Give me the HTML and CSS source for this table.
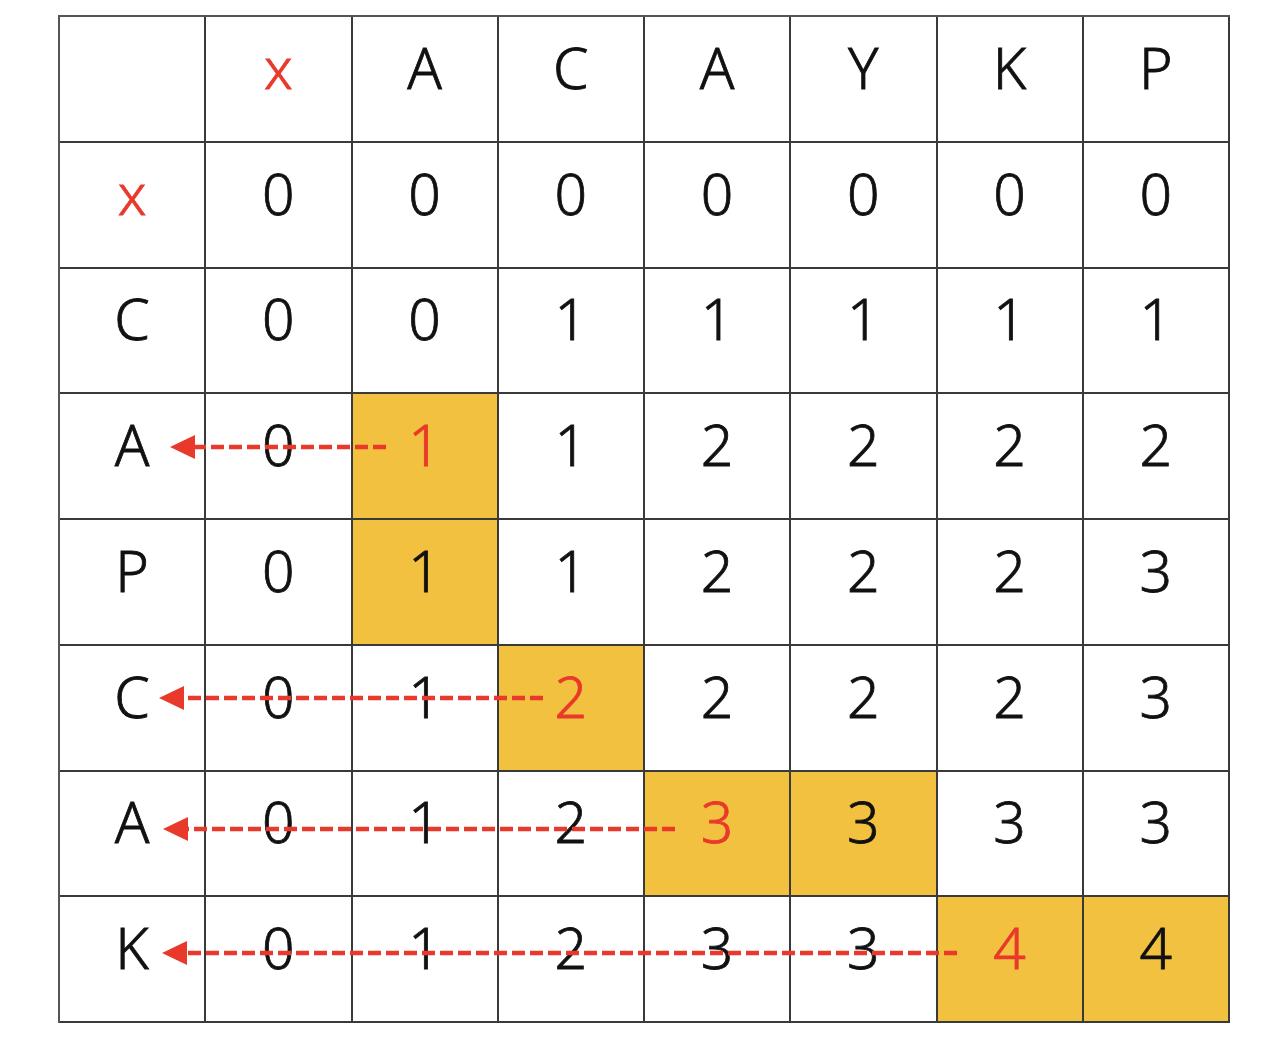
FILE: index.html
```html
<!DOCTYPE html>
<html>
<head>
<meta charset="utf-8">
<link rel="stylesheet" href="styles.css">
</head>
<body>
<div class="wrap">
  <div class="grid">
    <div class="cell"></div><div class="cell red">x</div><div class="cell">A</div><div class="cell">C</div><div class="cell">A</div><div class="cell">Y</div><div class="cell">K</div><div class="cell">P</div>
    <div class="cell red">x</div><div class="cell">0</div><div class="cell">0</div><div class="cell">0</div><div class="cell">0</div><div class="cell">0</div><div class="cell">0</div><div class="cell">0</div>
    <div class="cell">C</div><div class="cell">0</div><div class="cell">0</div><div class="cell">1</div><div class="cell">1</div><div class="cell">1</div><div class="cell">1</div><div class="cell">1</div>
    <div class="cell">A</div><div class="cell">0</div><div class="cell hl red">1</div><div class="cell">1</div><div class="cell">2</div><div class="cell">2</div><div class="cell">2</div><div class="cell">2</div>
    <div class="cell">P</div><div class="cell">0</div><div class="cell hl">1</div><div class="cell">1</div><div class="cell">2</div><div class="cell">2</div><div class="cell">2</div><div class="cell">3</div>
    <div class="cell">C</div><div class="cell">0</div><div class="cell">1</div><div class="cell hl red">2</div><div class="cell">2</div><div class="cell">2</div><div class="cell">2</div><div class="cell">3</div>
    <div class="cell">A</div><div class="cell">0</div><div class="cell">1</div><div class="cell">2</div><div class="cell hl red">3</div><div class="cell hl">3</div><div class="cell">3</div><div class="cell">3</div>
    <div class="cell">K</div><div class="cell">0</div><div class="cell">1</div><div class="cell">2</div><div class="cell">3</div><div class="cell">3</div><div class="cell hl red">4</div><div class="cell hl">4</div>
  </div>
  <svg class="arrows" width="1172" height="1008" viewBox="0 0 1172 1008" xmlns="http://www.w3.org/2000/svg">
    <g stroke="#e8392b" stroke-width="4.5" stroke-dasharray="13 5" fill="none">
      <line x1="328" y1="432" x2="135" y2="432"/>
      <line x1="485" y1="683" x2="124" y2="683"/>
      <line x1="617" y1="814" x2="128" y2="814"/>
      <line x1="899" y1="938" x2="127" y2="938"/>
    </g>
    <g fill="#e8392b">
      <polygon points="112,432 137,420 137,444"/>
      <polygon points="101,683 126,671 126,695"/>
      <polygon points="105,814 130,802 130,826"/>
      <polygon points="104,938 129,926 129,950"/>
    </g>
  </svg>
</div>
</body>
</html>
```
FILE: styles.css
```css
html, body {
  margin: 0;
  padding: 0;
  background: #ffffff;
}

.wrap {
  position: relative;
  margin: 15px 0 0 58px;
  width: 1172px;
}

.grid {
  display: grid;
  grid-template-columns: repeat(8, 146.25px);
  grid-template-rows: repeat(8, 125.75px);
  border-left: 2px solid #555;
  border-top: 2px solid #555;
  width: 1170px;
}

.cell {
  border-right: 2px solid #3a3a3a;
  border-bottom: 2px solid #3a3a3a;
  display: flex;
  align-items: center;
  justify-content: center;
  font-family: "Noto Sans", "Open Sans", sans-serif;
  font-weight: 300;
  font-size: 57px;
  color: #111;
  -webkit-text-stroke: 0.8px currentColor;
  padding-bottom: 24px;
  box-sizing: border-box;
}

.cell.red {
  color: #e8392b;
}

.cell.hl {
  background: #f2c13f;
}

.arrows {
  position: absolute;
  left: 0;
  top: 0;
  pointer-events: none;
}
```
